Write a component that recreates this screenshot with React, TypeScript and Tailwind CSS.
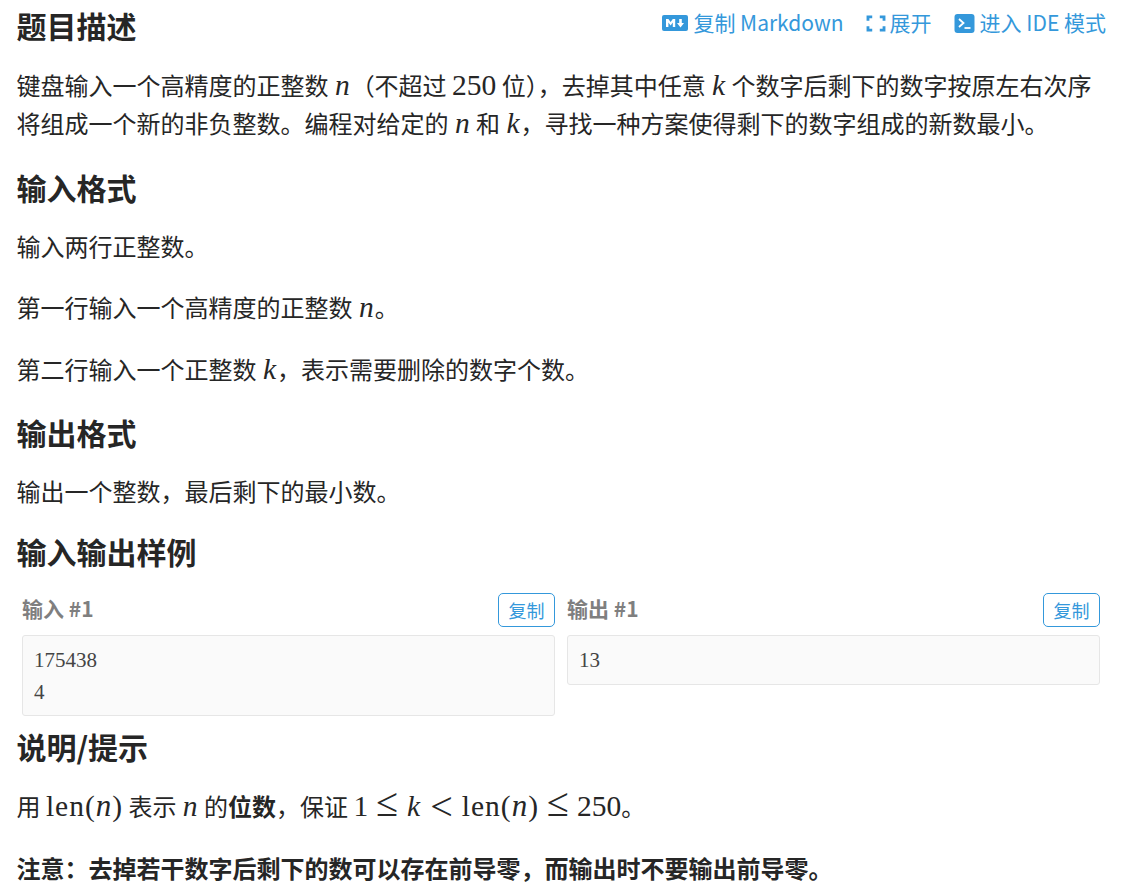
const cjk = "font-['Noto_Sans_CJK_SC',sans-serif]";

function M({ children }: { children: React.ReactNode }) {
  return <span className="font-['Liberation_Serif',serif] text-[29.5px] leading-none">{children}</span>;
}

function V({ children }: { children: React.ReactNode }) {
  return <span className="px-[1px] font-['Liberation_Serif',serif] text-[29.5px] italic leading-none">{children}</span>;
}

function Fn() {
  return (
    <span className="font-['Liberation_Serif',serif] text-[29.5px] leading-none tracking-[1px]">
      len(<i className="text-[31px]">n</i>)
    </span>
  );
}

function Op({ children }: { children: React.ReactNode }) {
  return <span className="mx-[8px] font-['Liberation_Serif',serif] text-[40px] leading-[0]">{children}</span>;
}

function H({ children, className }: { children: React.ReactNode; className: string }) {
  return <h2 className={`text-[30px] font-bold leading-[42px] ${className}`}>{children}</h2>;
}

function P({ children, className }: { children: React.ReactNode; className: string }) {
  return <p className={`text-[24px] leading-[38.4px] ${className}`}>{children}</p>;
}

function MdIcon() {
  return (
    <svg viewBox="0 0 26 16" className="h-[16px] w-[26px]">
      <rect width="26" height="16" rx="2" fill="#3498db" />
      <path d="M4 12V4h2.4L8.6 7l2.2-3h2.4v8h-2.4V7.5L8.6 10.4 6.4 7.5V12z" fill="#fff" />
      <path d="M17.2 4h2.6v4H22l-3.5 4.4L15 8h2.2z" fill="#fff" />
    </svg>
  );
}

function ExpandIcon() {
  return (
    <svg viewBox="0 0 22 18" className="h-[17px] w-[22px]" fill="none" stroke="#3498db" strokeWidth="3">
      <path d="M7 2H2.5v4M2.5 12v4H7M15 2h4.5v4M19.5 12v4H15" />
    </svg>
  );
}

function TermIcon() {
  return (
    <svg viewBox="0 0 20 19" className="h-[19px] w-[21px]">
      <rect width="20" height="19" rx="3" fill="#3498db" />
      <path d="M4.5 5l4.5 4-4.5 4" fill="none" stroke="#fff" strokeWidth="1.8" />
      <path d="M10 14h6" stroke="#fff" strokeWidth="1.8" />
    </svg>
  );
}

function Sample({ label, lines }: { label: string; lines: string[] }) {
  return (
    <div className="flex-1">
      <div className="flex h-[34px] items-center justify-between">
        <span className="pb-[3px] text-[21px] font-bold text-[#7f7f7f]">{label}</span>
        <button className="h-[34px] w-[57px] rounded-[5px] border border-[#3498db] text-[18px] text-[#3498db]">复制</button>
      </div>
      <pre className="mt-[8px] rounded-[3px] border border-[#e6e6e6] bg-[#fafafa] px-[11px] pb-[7px] pt-[9px] font-['Liberation_Serif',serif] text-[21px] leading-[31.5px] text-[#444]">
        {lines.join("\n")}
      </pre>
    </div>
  );
}

export default function App() {
  return (
    <div className={`${cjk} h-[891px] overflow-hidden bg-white pl-[16.5px] pr-[19px] pt-[4px] text-[#262626]`}>
      <div className="flex items-center justify-between">
        <H className="mt-0">题目描述</H>
        <div className="mb-[4px] flex items-center text-[21px] text-[#3498db]">
          <a className="flex items-center gap-[5px]">
            <MdIcon />
            复制 Markdown
          </a>
          <a className="ml-[21px] flex items-center gap-[3px]">
            <ExpandIcon />
            展开
          </a>
          <a className="ml-[22px] flex items-center gap-[5px]">
            <TermIcon />
            进入 IDE 模式
          </a>
        </div>
      </div>

      <P className="mt-[20px]">
        键盘输入一个高精度的正整数 <V>n</V>（不超过 <M>250</M> 位），去掉其中任意 <V>k</V> 个数字后剩下的数字按原左右次序将组成一个新的非负整数。编程对给定的 <V>n</V> 和 <V>k</V>，寻找一种方案使得剩下的数字组成的新数最小。
      </P>

      <H className="mt-[23px]">输入格式</H>
      <P className="mt-[19px]">输入两行正整数。</P>
      <P className="mt-[23px]">第一行输入一个高精度的正整数 <V>n</V>。</P>
      <P className="mt-[23px]">第二行输入一个正整数 <V>k</V>，表示需要删除的数字个数。</P>

      <H className="mt-[23px]">输出格式</H>
      <P className="mt-[19px]">输出一个整数，最后剩下的最小数。</P>

      <H className="mt-[20px]">输入输出样例</H>
      <div className="mt-[21px] flex items-start gap-[12px] pl-[5.5px] pr-[6px]">
        <Sample label="输入 #1" lines={["175438", "4"]} />
        <Sample label="输出 #1" lines={["13"]} />
      </div>

      <H className="mt-[9px]">说明/提示</H>
      <P className="mt-[20px]">
        用 <Fn /> 表示 <V>n</V> 的<b>位数</b>，保证 <M>1</M><Op>≤</Op><V>k</V>
        <span className="mx-[9px] align-[-4px] font-['Liberation_Serif',serif] text-[40px] leading-[0]">&lt;</span>
        <Fn /><Op>≤</Op><M>250</M>。
      </P>
      <P className="mt-[23px]"><b>注意：去掉若干数字后剩下的数可以存在前导零，而输出时不要输出前导零。</b></P>
    </div>
  );
}
